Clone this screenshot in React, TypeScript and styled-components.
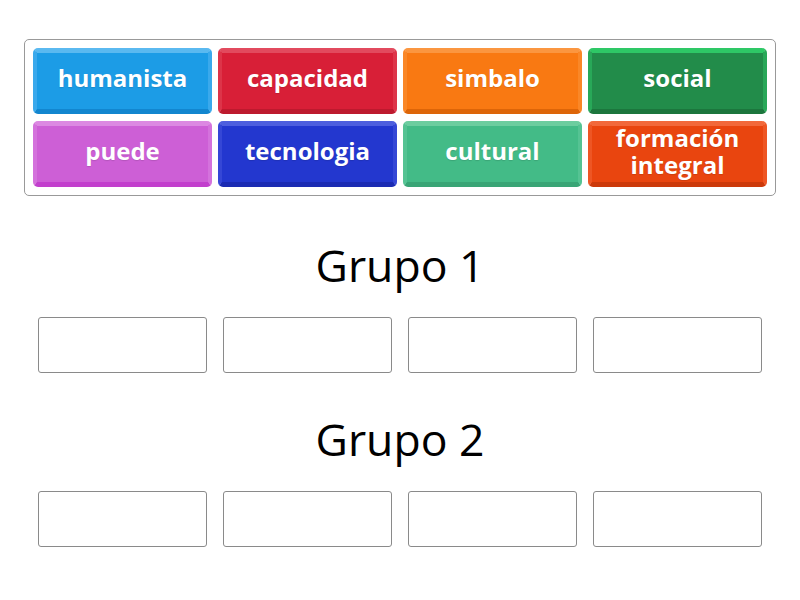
import styled, { createGlobalStyle } from "styled-components";

const GlobalStyle = createGlobalStyle`
  body {
    margin: 0;
    background: #ffffff;
    font-family: "Open Sans", "Noto Sans", sans-serif;
  }
`;

type Tone = { face: string; top: string; side: string; bottom: string };

const tiles: { label: string; tone: Tone }[] = [
  { label: "humanista", tone: { face: "#1c9ce6", top: "#5ab9f0", side: "#3aa9ec", bottom: "#1286cf" } },
  { label: "capacidad", tone: { face: "#d81f37", top: "#e24a5e", side: "#dd3449", bottom: "#bd1a2e" } },
  { label: "simbalo", tone: { face: "#f97912", top: "#fb9640", side: "#fa8727", bottom: "#dd6508" } },
  { label: "social", tone: { face: "#228c4a", top: "#2ec866", side: "#28a858", bottom: "#1c763d" } },
  { label: "puede", tone: { face: "#cd5fd6", top: "#dc88e2", side: "#d472dc", bottom: "#c23fcd" } },
  { label: "tecnologia", tone: { face: "#2337cf", top: "#4d5ede", side: "#3547d6", bottom: "#1b2bb3" } },
  { label: "cultural", tone: { face: "#43bb87", top: "#6ccd9f", side: "#55c393", bottom: "#39a576" } },
  { label: "formación integral", tone: { face: "#e9450f", top: "#f2683a", side: "#ee5624", bottom: "#cc390a" } },
];

const Tray = styled.div`
  margin: 39px 24px 0;
  padding: 8px;
  border: 1px solid #999;
  border-radius: 5px;
  display: grid;
  grid-template-columns: repeat(4, 1fr);
  column-gap: 6px;
  row-gap: 7px;
`;

const Tile = styled.div<{ $tone: Tone }>`
  height: 66px;
  box-sizing: border-box;
  border-radius: 5px;
  background: ${(p) => p.$tone.face};
  border-top: 5px solid ${(p) => p.$tone.top};
  border-left: 4px solid ${(p) => p.$tone.side};
  border-right: 4px solid ${(p) => p.$tone.side};
  border-bottom: 5px solid ${(p) => p.$tone.bottom};
  display: flex;
  align-items: center;
  justify-content: center;
  text-align: center;
  color: #fff;
  font-weight: 700;
  font-size: 24px;
  line-height: 27px;
  padding-bottom: 7px;
  text-shadow: 0 1px 1px rgba(0, 0, 0, 0.12);
`;

const Group = styled.section<{ $gap: number }>`
  margin-top: ${(p) => p.$gap}px;
`;

const Heading = styled.h2`
  margin: 0;
  text-align: center;
  font-weight: 400;
  font-size: 44.5px;
  line-height: 50px;
  color: #000;
`;

const Slots = styled.div`
  margin-top: 27px;
  padding: 0 38px;
  display: grid;
  grid-template-columns: repeat(4, 1fr);
  column-gap: 16px;
`;

const Slot = styled.div`
  height: 56px;
  box-sizing: border-box;
  border: 1px solid #8a8a8a;
  border-radius: 3px;
  background: #fff;
`;

export default function App() {
  return (
    <>
      <GlobalStyle />
      <Tray>
        {tiles.map((t) => (
          <Tile key={t.label} $tone={t.tone}>
            {t.label}
          </Tile>
        ))}
      </Tray>
      {["Grupo 1", "Grupo 2"].map((g, i) => (
        <Group key={g} $gap={i === 0 ? 44 : 41}>
          <Heading>{g}</Heading>
          <Slots>
            {[0, 1, 2, 3].map((n) => (
              <Slot key={n} />
            ))}
          </Slots>
        </Group>
      ))}
    </>
  );
}
